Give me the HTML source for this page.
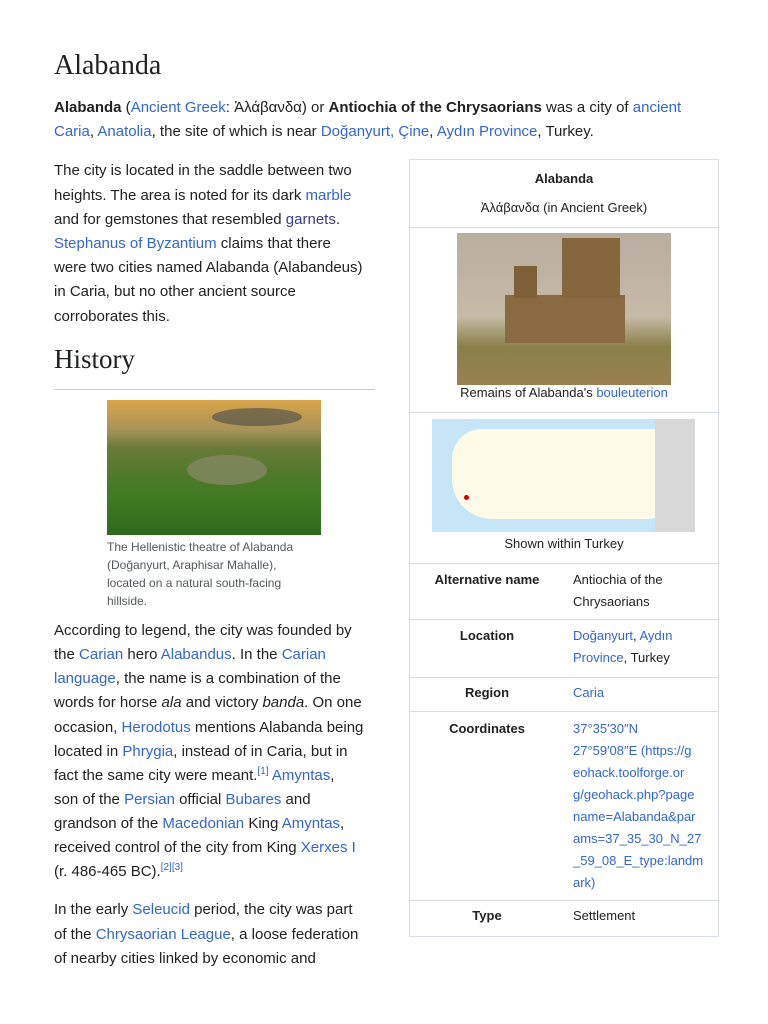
<!DOCTYPE html>
<html><head><meta charset="utf-8"><style>
body{margin:0;width:768px;height:1024px;background:#fff;position:relative;overflow:hidden;font-family:"Liberation Sans",sans-serif;color:#202122}
.l{position:absolute;left:54px;white-space:nowrap;font-size:15px;line-height:24px}
a{color:#3366cc;text-decoration:none}
b{font-weight:bold}
sup{font-size:10px;line-height:0}
.h{position:absolute;left:54px;font-family:"Liberation Serif",serif;font-size:27px;color:#202122}
.cap{position:absolute;left:107px;font-size:12px;line-height:18px;color:#54595d;white-space:nowrap}
.ib{position:absolute;left:409px;top:159px;width:308px;height:776px;border:1px solid #dadde3}
.sep{position:absolute;left:410px;width:308px;height:1px;background:#dadde3}
.t{position:absolute;font-size:13px;line-height:22px;white-space:nowrap}
.k{font-weight:bold;width:156px;left:409px;text-align:center}
.v{left:573px}
</style></head><body>
<div class="h" style="top:50px;font-size:28px">Alabanda</div>
<div class="l" style="top:96px"><b>Alabanda</b> (<a>Ancient Greek</a>: Ἀλάβανδα) or <b>Antiochia of the Chrysaorians</b> was a city of <a>ancient</a></div>
<div class="l" style="top:120px"><a>Caria</a>, <a>Anatolia</a>, the site of which is near <a>Doğanyurt, Çine</a>, <a>Aydın Province</a>, Turkey.</div>

<div class="l" style="top:159px">The city is located in the saddle between two</div>
<div class="l" style="top:184px">heights. The area is noted for its dark <a>marble</a></div>
<div class="l" style="top:208px">and for gemstones that resembled <a style="color:#3a3a8c">garnets</a>.</div>
<div class="l" style="top:232px"><a>Stephanus of Byzantium</a> claims that there</div>
<div class="l" style="top:256px">were two cities named Alabanda (Alabandeus)</div>
<div class="l" style="top:280px">in Caria, but no other ancient source</div>
<div class="l" style="top:305px">corroborates this.</div>
<div class="h" style="top:344px">History</div>
<div style="position:absolute;left:54px;top:389px;width:321px;height:1px;background:#c8ccd1"></div>

<div style="position:absolute;left:107px;top:400px;width:214px;height:135px;background:linear-gradient(180deg,#d9a54a 0%,#a8935a 22%,#6b7a3a 35%,#4f7a2a 55%,#3f7a22 75%,#2e6a1a 100%)">
<div style="position:absolute;left:80px;top:55px;width:80px;height:30px;border-radius:50%;background:#8a8a6a;opacity:.7"></div>
<div style="position:absolute;left:105px;top:8px;width:90px;height:18px;border-radius:50%;background:#4a4a4a;opacity:.6"></div>
</div>
<div class="cap" style="top:538px">The Hellenistic theatre of Alabanda</div>
<div class="cap" style="top:556px">(Doğanyurt, Araphisar Mahalle),</div>
<div class="cap" style="top:574px">located on a natural south-facing</div>
<div class="cap" style="top:592px">hillside.</div>

<div class="l" style="top:619px">According to legend, the city was founded by</div>
<div class="l" style="top:643px">the <a>Carian</a> hero <a>Alabandus</a>. In the <a>Carian</a></div>
<div class="l" style="top:667px"><a>language</a>, the name is a combination of the</div>
<div class="l" style="top:691px">words for horse <i>ala</i> and victory <i>banda</i>. On one</div>
<div class="l" style="top:716px">occasion, <a>Herodotus</a> mentions Alabanda being</div>
<div class="l" style="top:740px">located in <a>Phrygia</a>, instead of in Caria, but in</div>
<div class="l" style="top:764px">fact the same city were meant.<sup><a>[1]</a></sup> <a>Amyntas</a>,</div>
<div class="l" style="top:788px">son of the <a>Persian</a> official <a>Bubares</a> and</div>
<div class="l" style="top:812px">grandson of the <a>Macedonian</a> King <a>Amyntas</a>,</div>
<div class="l" style="top:836px">received control of the city from King <a>Xerxes I</a></div>
<div class="l" style="top:860px">(r. 486-465 BC).<sup><a>[2][3]</a></sup></div>
<div class="l" style="top:898px">In the early <a>Seleucid</a> period, the city was part</div>
<div class="l" style="top:923px">of the <a>Chrysaorian League</a>, a loose federation</div>
<div class="l" style="top:947px">of nearby cities linked by economic and</div>

<div class="ib"></div>
<div class="t" style="left:409px;width:310px;text-align:center;top:168px;font-weight:bold">Alabanda</div>
<div class="t" style="left:409px;width:310px;text-align:center;top:197px">Ἀλάβανδα (in Ancient Greek)</div>
<div class="sep" style="top:227px"></div>
<div style="position:absolute;left:457px;top:233px;width:214px;height:152px;background:linear-gradient(180deg,#b8aea0 0%,#c6b9a6 55%,#8a8048 75%,#9a8050 100%)">
<div style="position:absolute;left:48px;top:62px;width:120px;height:48px;background:#8a6a40"></div>
<div style="position:absolute;left:57px;top:33px;width:23px;height:32px;background:#7e6038"></div>
<div style="position:absolute;left:105px;top:5px;width:58px;height:60px;background:#86663c"></div>
</div>
<div class="t" style="left:409px;width:310px;text-align:center;top:382px">Remains of Alabanda's <a>bouleuterion</a></div>
<div class="sep" style="top:412px"></div>
<div style="position:absolute;left:432px;top:419px;width:263px;height:113px;background:#c6e6f8">
<div style="position:absolute;left:20px;top:10px;width:225px;height:90px;background:#fdfbe8;border-radius:30px 20px 30px 40px"></div>
<div style="position:absolute;right:0;top:0;width:40px;height:113px;background:#d8d8d8"></div>
<div style="position:absolute;left:32px;top:76px;width:5px;height:5px;background:#c00;border-radius:50%"></div>
</div>
<div class="t" style="left:409px;width:310px;text-align:center;top:533px">Shown within Turkey</div>
<div class="sep" style="top:563px"></div>
<div class="t k" style="top:569px">Alternative name</div>
<div class="t v" style="top:569px">Antiochia of the<br>Chrysaorians</div>
<div class="sep" style="top:619px"></div>
<div class="t k" style="top:625px">Location</div>
<div class="t v" style="top:625px"><a>Doğanyurt</a>, <a>Aydın</a><br><a>Province</a>, Turkey</div>
<div class="sep" style="top:677px"></div>
<div class="t k" style="top:682px">Region</div>
<div class="t v" style="top:682px"><a>Caria</a></div>
<div class="sep" style="top:711px"></div>
<div class="t k" style="top:718px">Coordinates</div>
<div class="t v" style="top:718px"><a>37°35′30″N<br>27°59′08″E (https://g<br>eohack.toolforge.or<br>g/geohack.php?page<br>name=Alabanda&amp;par<br>ams=37_35_30_N_27<br>_59_08_E_type:landm<br>ark)</a></div>
<div class="sep" style="top:900px"></div>
<div class="t k" style="top:905px">Type</div>
<div class="t v" style="top:905px">Settlement</div>
</body></html>
